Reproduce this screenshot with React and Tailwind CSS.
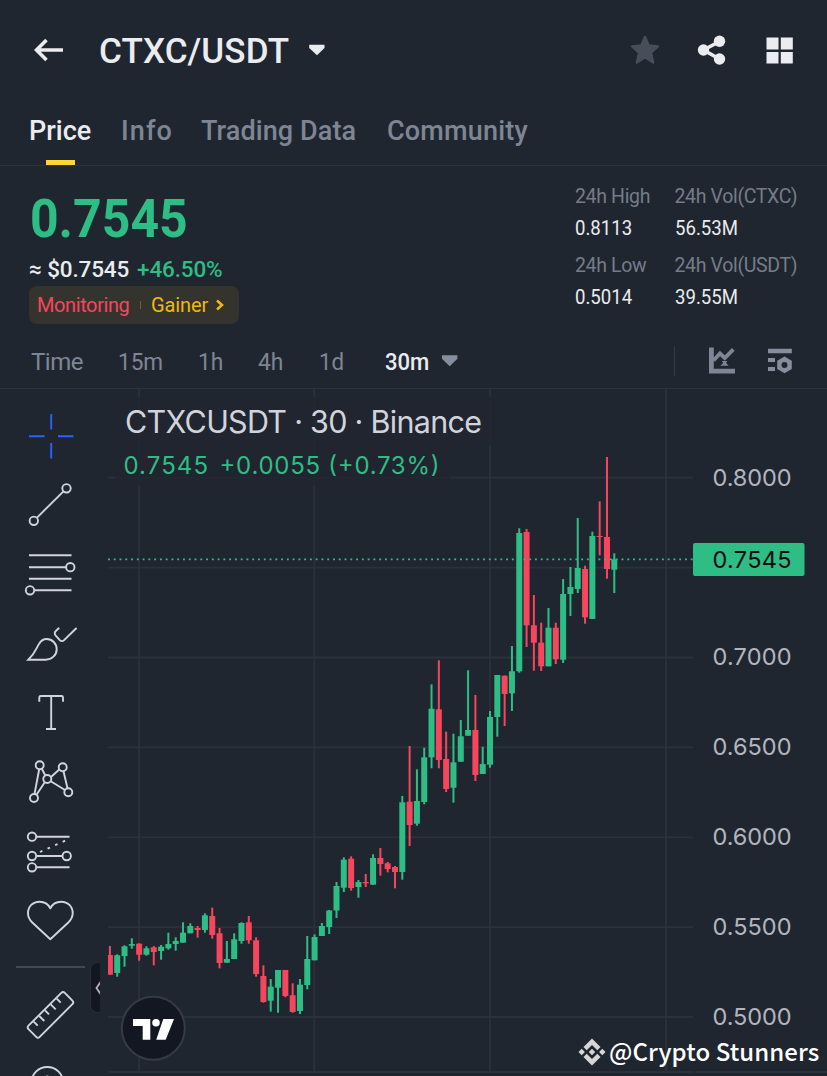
const UP = '#2ebd85';
const DOWN = '#f6465d';

// [direction, high, open/close top, open/close bottom, low] as y positions on the chart
const candles = [
  ['d', 946, 955, 974.7, 974.7],
  ['u', 954.3, 955.3, 973, 976.7],
  ['u', 945.3, 946.3, 956, 966.7],
  ['u', 938.3, 944, 945.7, 948.7],
  ['d', 943.3, 943.7, 954.7, 960.7],
  ['u', 946.3, 948.3, 954.7, 955.7],
  ['d', 946, 947.3, 952, 965.3],
  ['u', 945, 946.7, 951, 959.7],
  ['u', 932.7, 944, 948.3, 949.7],
  ['u', 937.3, 941, 944, 950.7],
  ['u', 922.3, 932.7, 942.7, 942.7],
  ['u', 923.3, 926, 933.3, 933.3],
  ['d', 926, 928, 930, 937.7],
  ['u', 913.3, 915.3, 930, 932.7],
  ['d', 907.7, 916, 935, 938.7],
  ['d', 928, 933.3, 963, 968.3],
  ['u', 941, 959, 962.7, 962.7],
  ['u', 933.3, 939.3, 959, 959],
  ['u', 922.3, 923, 941, 943.7],
  ['d', 916, 922.3, 940.3, 943.7],
  ['d', 937.3, 940.3, 974, 976.7],
  ['d', 965.3, 976, 1002, 1002.7],
  ['u', 979, 986.7, 1000.7, 1011.7],
  ['u', 970, 970, 987.7, 1012.7],
  ['d', 970, 970, 996, 997.3],
  ['d', 983.3, 995.3, 1012, 1012.7],
  ['u', 979, 984.7, 1011, 1014],
  ['u', 936, 959, 985, 989.3],
  ['u', 934.3, 937, 960.3, 960.3],
  ['u', 923, 926, 936, 936],
  ['u', 910, 910.5, 927, 934],
  ['u', 882, 886, 910.5, 918],
  ['u', 857.3, 859.7, 887.7, 892],
  ['d', 856.3, 858.7, 888, 890.7],
  ['u', 880, 882, 887, 897.7],
  ['d', 874, 882, 883.3, 887],
  ['u', 854.3, 858, 884.7, 884.7],
  ['d', 848, 858, 864, 875.7],
  ['d', 862, 863.3, 869, 872.3],
  ['d', 866, 867, 872, 888.3],
  ['u', 796, 802.3, 872, 879.7],
  ['d', 746, 801.7, 825, 846],
  ['u', 769.3, 801, 823.7, 825.7],
  ['u', 747.7, 757.3, 802, 804.3],
  ['u', 684.3, 708.7, 757.3, 768.3],
  ['d', 660.3, 709.3, 760, 768.3],
  ['d', 731.7, 759, 789, 792],
  ['u', 733.7, 762.3, 787.7, 802.7],
  ['u', 720, 736.3, 761.7, 761.7],
  ['u', 670.3, 730, 735.7, 735.7],
  ['d', 695, 730, 775, 781],
  ['u', 746.7, 764, 774, 774],
  ['u', 711, 717, 764.7, 767.7],
  ['u', 675, 675, 717, 736.7],
  ['d', 675.5, 675.7, 694, 726],
  ['u', 646, 671.3, 693.3, 711],
  ['u', 528.3, 533, 671.3, 672.7],
  ['d', 529, 532, 625.3, 647],
  ['d', 595, 625.3, 642.7, 670.7],
  ['d', 622.7, 642.7, 666.3, 671],
  ['u', 608, 627.7, 666.3, 666.3],
  ['d', 622.7, 627.7, 659.3, 664],
  ['u', 579, 594, 659.7, 663],
  ['u', 567, 587, 594, 616],
  ['u', 518, 568, 589, 593],
  ['d', 565.7, 569, 617.3, 623.7],
  ['u', 531.7, 536, 619, 619],
  ['d', 501.3, 536, 537, 555.3],
  ['d', 457, 537, 569, 578.7],
  ['u', 553.3, 559.3, 569.7, 593],
];

const levels = [
  { label: '0.8000', y: 477.7 },
  { label: null, y: 567.6 },
  { label: '0.7000', y: 657.5 },
  { label: '0.6500', y: 747.4 },
  { label: '0.6000', y: 837.3 },
  { label: '0.5500', y: 927.2 },
  { label: '0.5000', y: 1017 },
];

const columns = [139, 314.3, 490, 666];

function Header() {
  return (
    <header className="flex h-[100px] items-center pl-[34px] pr-[34px]">
      <svg className="w-[30px] h-6" viewBox="0 0 30 24" fill="none" stroke="#eaecef" strokeWidth="3.6">
        <path d="M29 12H3M12.5 2 2.5 12l10 10" />
      </svg>
      <h1 className="ml-[35px] w-[210px] whitespace-nowrap text-[35px] leading-[40px] pt-1 font-medium tracking-[0.1px] text-[#eaecef]">
        CTXC/USDT
      </h1>
      <svg className="w-4 h-3" viewBox="0 0 16 12" fill="#eaecef">
        <path d="M.2.800h15.300v3.200L8 11.300.2 4z" />
      </svg>
      <div className="ml-auto flex items-center">
        <svg className="w-[30px] h-[30px]" viewBox="0 0 30 30" fill="#474d59" stroke="#474d59" strokeWidth="2.5" strokeLinejoin="round">
          <path d="m15 2 3.6 8.6 9.4.8-7.1 6.1 2.2 10L15 22.3 6.900 27.500l2.200-10L2 11.400l9.400-.8z" />
        </svg>
        <svg className="ml-[37px] w-[30px] h-[30px]" viewBox="0 0 30 30" fill="#eaecef">
          <path d="M22.500 6.500 6.500 15l16 9" fill="none" stroke="#eaecef" strokeWidth="3.6" />
          <circle cx="22.500" cy="6.300" r="5.700" />
          <circle cx="6.500" cy="15" r="5.700" />
          <circle cx="22.500" cy="24" r="5.700" />
        </svg>
        <svg className="ml-[39px] w-[27px] h-[27px]" viewBox="0 0 27 27" fill="#eaecef">
          <path d="M.5.500h12v12H.5zM14.800.500h12v12h-12zM.5 15h12v11.500H.5zM14.800 15h12v11.500h-12z" />
        </svg>
      </div>
    </header>
  );
}

function Tabs() {
  return (
    <nav className="flex h-[66px] border-b border-[#2c323c] pl-[29px] text-[27px] font-medium leading-[62px] text-[#7e8695] whitespace-nowrap">
      <div className="relative w-[92px] text-[#eaecef]">
        <span>Price</span>
        <span className="absolute left-[17px] bottom-0 h-[5px] w-[29px] bg-[#fcd535]" />
      </div>
      <span className="w-[80px] tracking-[1.1px]">Info</span>
      <span className="w-[186px] tracking-[0.1px]">Trading Data</span>
      <span className="tracking-[0.2px]">Community</span>
    </nav>
  );
}

function Stat({ label, value }) {
  return (
    <div className="whitespace-nowrap">
      <div className="h-[31px] text-[19.500px] leading-[32px] tracking-[-0.35px] text-[#757c89]">{label}</div>
      <div className="h-[38px] origin-left scale-x-[0.93] text-[20px] leading-[32px] text-[#eaecef]">{value}</div>
    </div>
  );
}

function Summary() {
  return (
    <section className="flex h-[168px] pl-[29px]">
      <div className="w-[546px] whitespace-nowrap">
        <div className="mt-[25px] h-[60px] origin-left scale-x-[0.925] pl-px text-[54px] font-bold leading-[56px] text-[#2ebd85]">
          0.7545
        </div>
        <div className="flex h-[35px] gap-2 text-[22.500px] font-medium leading-[37px] tracking-[-0.15px]">
          <span className="text-[#eaecef]">≈ $0.7545</span>
          <span className="text-[#2ebd85]">+46.50%</span>
        </div>
        <div className="flex h-[38px] w-[210px] items-center rounded-lg bg-[#35332d] pl-2 text-[20px]">
          <span className="w-[103px] tracking-[-0.4px] text-[#f6465d]">Monitoring</span>
          <span className="h-2 w-px bg-[#76611c]" />
          <span className="ml-[10px] w-[65px] tracking-[-0.1px] text-[#f0b90b]">Gainer</span>
          <svg className="w-2 h-3" viewBox="0 0 8 12" fill="none" stroke="#f0b90b" strokeWidth="2.500">
            <path d="m1 1.500 5 4.500-5 4.500" />
          </svg>
        </div>
      </div>
      <div className="grid grid-cols-[99.500px_1fr] content-start pt-[15px]">
        <Stat label="24h High" value="0.8113" />
        <Stat label="24h Vol(CTXC)" value="56.53M" />
        <Stat label="24h Low" value="0.5014" />
        <Stat label="24h Vol(USDT)" value="39.55M" />
      </div>
    </section>
  );
}

function Intervals() {
  return (
    <div className="flex h-[55px] items-center border-b border-[#2c323c] pl-[31px] text-[24px] text-[#7e8695] whitespace-nowrap">
      <span className="w-[87px] pt-px tracking-[-0.5px]">Time</span>
      <span className="w-[80px] pt-px origin-left scale-x-[0.94]">15m</span>
      <span className="w-[60px] pt-px origin-left scale-x-[0.95]">1h</span>
      <span className="w-[61px] pt-px origin-left scale-x-[0.95]">4h</span>
      <span className="w-[66px] pt-px origin-left scale-x-[0.93]">1d</span>
      <span className="w-[57px] pt-px origin-left scale-x-[0.92] font-medium text-[#eaecef]">30m</span>
      <svg className="w-4 h-3" viewBox="0 0 16 12" fill="#848e9c">
        <path d="M0 .300h15.400v3.500L7.700 11.200 0 3.800z" />
      </svg>
      <span className="ml-[216px] h-[30px] w-px bg-[#343a45]" />
      <svg className="ml-[34px] mb-0.5 w-[26px] h-[27px]" viewBox="0 0 26 27" fill="#7e8695">
        <path d="M0 .500h4.800v21.300H26v4.700H0z" />
        <path d="m4.500 13.500 6.500-7 4.800 4.500L24.300 2.300" fill="none" stroke="#7e8695" strokeWidth="3.800" />
        <path d="M11.300 18.700h8.400L17 15.900l1.300-1.900h-5.600l1.500 1.900z" />
      </svg>
      <svg className="ml-[33px] w-6 h-[26px]" viewBox="0 0 24 26" fill="#848e9c">
        <path d="M0 .8h23.800v4.400H0zM0 10h7v4H0zM0 19h7v4H0z" />
        <path fillRule="evenodd" d="m16.500 8.500 7.300 4.200v8.400l-7.300 4.200-7.300-4.200v-8.400zm0 5.400a3 3 0 1 0 0 6 3 3 0 0 0 0-6z" />
      </svg>
    </div>
  );
}

function Tool({ children, color = '#d1d4dc' }) {
  return (
    <svg
      className="block w-[100px] h-[69px] shrink-0"
      viewBox="0 0 100 69"
      fill="none"
      stroke={color}
      strokeWidth="1.900"
    >
      {children}
    </svg>
  );
}

function Toolbar() {
  return (
    <aside className="relative flex w-[100px] flex-col pt-[13px] overflow-hidden">
      {/* crosshair */}
      <Tool color="#2962ff">
        <path d="M51.200 12v15.500M51.200 41v15.500M29 34.300h15.500M58 34.300h15.500" />
      </Tool>
      {/* trend line */}
      <Tool>
        <circle cx="66.500" cy="17.300" r="4.200" />
        <circle cx="33.800" cy="49.800" r="4.200" />
        <path d="M36.800 46.800 63.500 20.300" />
      </Tool>
      {/* fib levels */}
      <Tool>
        <path d="M29 15.300h42.500M29 27.200h37M29 38.700h42.500M34.200 50.300h37.300" />
        <circle cx="70.300" cy="27.200" r="4.200" />
        <circle cx="30" cy="50.300" r="4.200" />
      </Tool>
      {/* brush */}
      <Tool>
        <path d="M28.300 50.700C36 43 36.500 38.500 39 35c2-3.500 4.500-5 7.700-5 5.500 0 10 4.500 10 10.200 0 5.900-5 10.500-11 10.500z" />
        <path d="M58.700 19.300 55.800 22a3 3 0 0 0-.3 4.300l4.300 4.900a3 3 0 0 0 4.300 0L76 19.500" strokeLinecap="round" />
      </Tool>
      {/* text */}
      <Tool>
        <path d="M39.300 23.700V19.500a1.500 1.500 0 0 1 1.500-1.500h20.700a1.500 1.500 0 0 1 1.500 1.500v4.200M51.200 18v33M46 51h10" />
      </Tool>
      {/* pattern */}
      <Tool>
        <path d="M39.200 22.300 34.500 47M41.800 21.800l3.500 6.700M51 30l8.300-7.500M44.800 35.200 36.500 47.800M63.500 24.300l4 17M50.700 34.300l14.300 8.700" />
        <circle cx="39.700" cy="18.300" r="4" />
        <circle cx="62.700" cy="20.300" r="4" />
        <circle cx="47.300" cy="32" r="4" />
        <circle cx="34" cy="51" r="4" />
        <circle cx="68.300" cy="45.300" r="4" />
      </Tool>
      {/* forecast */}
      <Tool>
        <path d="M36 20.700h33.500M36 40h26.500M36 51.300h33.500" />
        <path d="M40 36 66 24.300" strokeDasharray="2.600 5.700" />
        <circle cx="32" cy="20.700" r="4.200" />
        <circle cx="32" cy="40" r="4.200" />
        <circle cx="66.700" cy="40" r="4.200" />
        <circle cx="32" cy="51.300" r="4.200" />
      </Tool>
      {/* favourites */}
      <Tool>
        <path d="M50.300 23.300c-2-4.200-6-6.600-10.800-6.600-6.700 0-11.500 4.800-11.500 11.500 0 4 1.700 6.700 4.300 9.300l18 16.800 18-16.800c2.600-2.600 4.400-5.300 4.400-9.300 0-6.700-4.800-11.500-11.500-11.500-4.900 0-8.900 2.400-10.900 6.600z" strokeLinejoin="round" />
      </Tool>
      <div className="ml-4 mt-3 mb-3 h-0.5 w-[69px] shrink-0 bg-[#434752]" />
      {/* ruler */}
      <Tool>
        <path d="M61.300 12.900 28.500 45.700a2.500 2.500 0 0 0 0 3.500l7.700 7.700a2.500 2.500 0 0 0 3.500 0l32.700-32.700a2.500 2.500 0 0 0 0-3.500l-7.600-7.800a2.500 2.500 0 0 0-3.500 0z" />
        <path d="m33.700 41.700 4 4M39.300 36l5 5M45 30.300l4 4M50.700 24.300l5 5M56.700 18.700l4 4" />
      </Tool>
      {/* zoom */}
      <Tool>
        <circle cx="47.300" cy="34" r="16" />
        <path d="M47.300 26.500v14M40 34h14" />
      </Tool>
      <span className="absolute left-[89.500px] top-[573px] flex h-[51px] w-[20px] items-center rounded-l-lg border border-[#262b36] bg-[#131722] pl-1">
        <svg className="w-[7px] h-4 shrink-0" viewBox="0 0 7 16" fill="none" stroke="#b2b5be" strokeWidth="1.800">
          <path d="M6 1.500 1.500 8 6 14.500" />
        </svg>
      </span>
    </aside>
  );
}

function Chart() {
  return (
    <svg className="block w-[727px] h-[687px]" viewBox="100 389 727 687" fontFamily="Inter, sans-serif">
      <g stroke="#2b313b" strokeWidth="1.800">
        {columns.map((x) => (
          <line key={x} x1={x} x2={x} y1="389" y2="1071" />
        ))}
        {levels.map(({ y }) => (
          <line key={y} x1="108" x2="693" y1={y} y2={y} />
        ))}
        <path d="M108 1072h585M695 1072h132" />
      </g>
      {/* legend backdrop */}
      <g fill="#202630" fillOpacity="0.75">
        <rect x="115" y="397" width="378" height="49" />
        <rect x="115" y="446" width="335" height="40" />
      </g>

      {candles.map(([dir, high, top, bottom, low], i) => {
        const x = 109.900 + i * 7.310;
        const left = Math.max(x - 3, 108);
        return (
          <g key={i} fill={dir === 'u' ? UP : DOWN}>
            <rect x={x - 1} y={high} width="2" height={low - high} />
            <rect x={left} y={top} width={x + 3 - left} height={bottom - top} />
          </g>
        );
      })}
      <line x1="108" x2="693" y1="559.300" y2="559.300" stroke={UP} strokeWidth="1.800" strokeDasharray="1.900 3.870" />

      <text x="125" y="433" fontSize="30.500" fill="#d1d4dc" textLength="357">CTXCUSDT · 30 · Binance</text>
      <g fontSize="24" fill={UP}>
        <text x="123.500" y="474" textLength="84.500">0.7545</text>
        <text x="219.500" y="474" textLength="220">+0.0055 (+0.73%)</text>
      </g>

      <g fontSize="23.500" fill="#b2b5be">
        {levels.filter((l) => l.label).map(({ label, y }) => (
          <text key={label} x="712.500" y={y + 7.900} textLength="79">{label}</text>
        ))}
      </g>
      <rect x="693" y="543" width="111.500" height="33" rx="2" fill={UP} />
      <text x="712.500" y="568" fontSize="23.500" fill="#0b0e11" textLength="79">0.7545</text>

      {/* TradingView badge */}
      <circle cx="153.300" cy="1028.300" r="31.500" fill="#131722" stroke="#363a45" strokeWidth="2" />
      <g fill="#fff">
        <path d="M133 1019h17.300v20.800h-7.600v-13.800H133z" />
        <circle cx="156" cy="1022.700" r="3.800" />
        <path d="M163.300 1019H174l-8.300 20.800h-9.500z" />
      </g>
    </svg>
  );
}

function Watermark() {
  return (
    <div className="absolute left-[578px] top-[1036px] flex h-8 items-center whitespace-nowrap text-white">
      <svg className="w-7 h-7" viewBox="0 0 28 28" fill="#d6d6d6">
        <path d="m14 .5 8.500 8.500-3.200 3.200L14 6.900l-5.300 5.300L5.500 9zM14 27.500 5.500 19l3.200-3.200 5.300 5.300 5.300-5.300 3.200 3.200zM14 10.800l3.200 3.200-3.200 3.200-3.200-3.200zM3.700 10.800 6.900 14l-3.200 3.200L.5 14zM24.300 10.800l3.200 3.200-3.200 3.200-3.200-3.200z" />
      </svg>
      <span className="ml-[3px] mb-0.5 text-[24px] font-medium leading-8 tracking-[0.08px] font-['Noto_Sans_CJK_SC',sans-serif]">
        @Crypto Stunners
      </span>
    </div>
  );
}

export default function App() {
  return (
    <main className="relative h-[1076px] w-[827px] overflow-hidden bg-[#202630] font-['Roboto',sans-serif]">
      <Header />
      <Tabs />
      <Summary />
      <Intervals />
      <div className="flex h-[687px] overflow-hidden">
        <Toolbar />
        <Chart />
      </div>
      <Watermark />
    </main>
  );
}
